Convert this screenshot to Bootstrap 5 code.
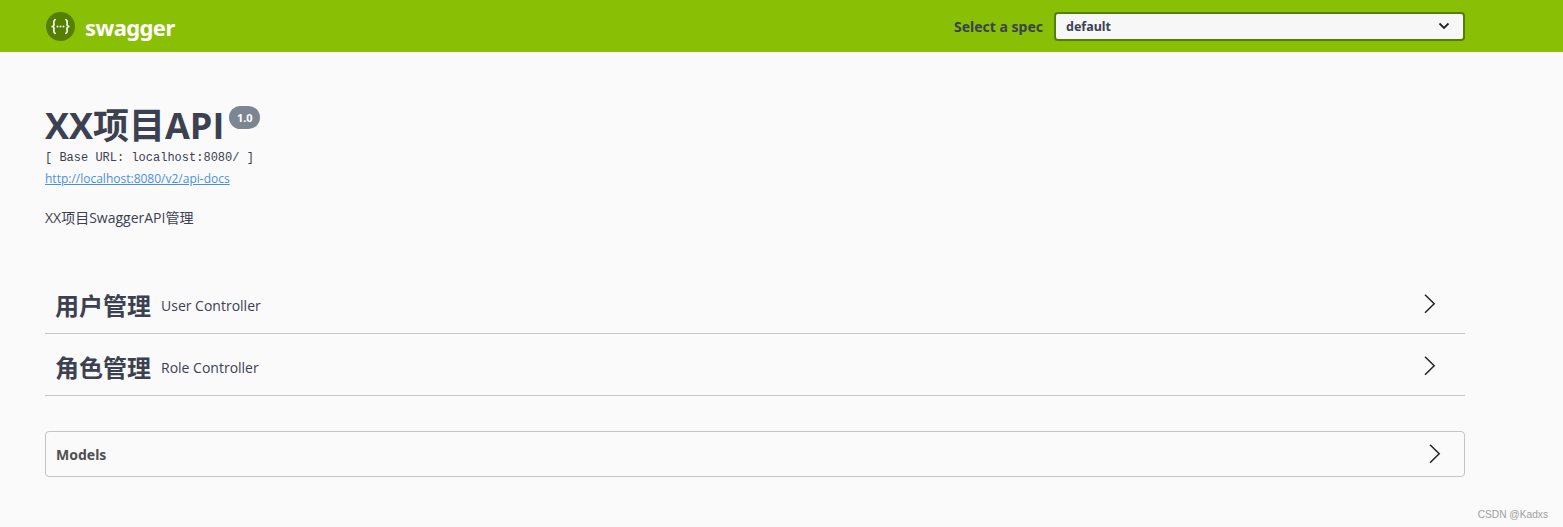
<!DOCTYPE html>
<html lang="zh-CN">
<head>
  <meta charset="UTF-8">
  <meta name="viewport" content="width=device-width, initial-scale=1.0">
  <title>Swagger UI</title>
  <link href="https://cdn.jsdelivr.net/npm/bootstrap@5.3.0/dist/css/bootstrap.min.css" rel="stylesheet">
  <style>
    body { background: #fafafa; color: #3b4151; font-family: "Open Sans", "Noto Sans CJK SC", sans-serif; height: 527px; overflow: hidden; position: relative; }
    .wrap-box { width: 1420px; margin-left: 45px; }
    .top-strip { background: #89bf04; height: 52px; }
    .brand-logo { margin: 1px 0 0 1px; }
    .brand-name { font-family: "Noto Sans", sans-serif; font-weight: 700; font-size: 22px; color: #fff; line-height: 1; letter-spacing: -.6px; margin-left: 10px; margin-top: 2px; }
    .spec-label { font-family: "Noto Sans", sans-serif; font-weight: 700; font-size: 14px; color: #3b4151; letter-spacing: 0; margin-right: 11px; }
    .spec-select { width: 411px; height: 29px; border: 2px solid #547f00; border-radius: 4px; background: #f7f7f7; font-family: "Noto Sans", sans-serif; font-weight: 700; font-size: 12.5px; color: #3b4151; padding: 0 13px 0 10px; }
    .spec-value { margin-top: 2px; }
    .api-title { font-family: "Open Sans", "Noto Sans CJK SC", sans-serif; font-weight: 700; font-size: 36px; line-height: 46px; margin: 0; }
    .ver-pill { background: #7d8492; color: #fff; font-family: "Noto Sans", sans-serif; font-weight: 700; font-size: 11px; border-radius: 57px; padding: 3px 7.5px; line-height: 17px; margin-left: 5px; margin-top: 3px; height: 23px; }
    .info-block { padding-top: 51px; }
    .base-url { font-family: "Liberation Mono", monospace; font-size: 12px; line-height: 14px; margin-top: 2px; color: #3b4151; }
    .docs-link { font-size: 12px; line-height: 16px; color: #4990e2; display: block; margin-top: 6px; }
    .desc-text { font-size: 14px; line-height: 20px; margin-top: 21px; }
    .tag-list { margin-top: 44px; }
    .tag-row { height: 62px; border-bottom: 1px solid #c5c6ca; padding: 6px 0 0 10px; }
    .tag-name { font-family: "Noto Sans CJK SC", sans-serif; font-weight: 700; font-size: 24px; line-height: 1; margin-bottom: 2px; }
    .tag-desc { font-size: 14px; margin-left: 10px; }
    .chev-icon { width: 20px; height: 20px; margin: 0 25px 3px 0; flex: none; }
    .models-box { height: 46px; margin-top: 35px; border: 1px solid #c3c4c9; border-radius: 4px; padding-left: 10px; }
    .models-name { font-family: "Noto Sans", sans-serif; font-weight: 700; font-size: 14px; color: #505050; }
    .models-box .chev-icon { margin: 0 19px 0 0; }
    .mark-csdn { position: absolute; right: 15px; bottom: 5px; font-family: "Liberation Sans", sans-serif; font-size: 10.2px; color: #a0a0a0; }
  </style>
</head>
<body>
  <div class="top-strip">
    <div class="wrap-box h-100 d-flex align-items-center justify-content-between">
      <div class="d-flex align-items-center">
        <svg class="brand-logo" width="29" height="29" viewBox="0 0 29 29">
          <circle cx="14.5" cy="14.5" r="14.5" fill="#547f00"/>
          <path d="M10 7.500c-3 0-2 3.500-2 5s-1 2-2.500 2c1.500 0 2.500.5 2.500 2s-1 5 2 5M19 7.500c3 0 2 3.500 2 5s1 2 2.500 2c-1.500 0-2.500.5-2.500 2s1 5-2 5" fill="none" stroke="#fff" stroke-width="1.600"/>
          <circle cx="11.500" cy="14.500" r="1" fill="#fff"/><circle cx="14.500" cy="14.500" r="1" fill="#fff"/><circle cx="17.500" cy="14.500" r="1" fill="#fff"/>
        </svg>
        <span class="brand-name">swagger</span>
      </div>
      <div class="d-flex align-items-center">
        <span class="spec-label">Select a spec</span>
        <div class="spec-select d-flex align-items-center justify-content-between">
          <span class="spec-value">default</span>
          <svg width="12" height="8" viewBox="0 0 12 8"><path d="M1.500 1.500 6 6l4.500-4.500" fill="none" stroke="#222" stroke-width="1.800"/></svg>
        </div>
      </div>
    </div>
  </div>

  <div class="wrap-box">
    <div class="info-block">
      <div class="d-flex align-items-start">
        <h2 class="api-title">XX项目API</h2>
        <span class="ver-pill">1.0</span>
      </div>
      <div class="base-url">[ Base URL: localhost:8080/ ]</div>
      <a class="docs-link" href="#">http://localhost:8080/v2/api-docs</a>
      <div class="desc-text">XX项目SwaggerAPI管理</div>
    </div>

    <div class="tag-list">
      <div class="tag-row d-flex align-items-center">
        <span class="tag-name">用户管理</span>
        <span class="tag-desc flex-grow-1">User Controller</span>
        <svg class="chev-icon" viewBox="0 0 20 20"><path d="M5 .8 14.200 9.800 5 18.800" fill="none" stroke="#222" stroke-width="1.500"/></svg>
      </div>
      <div class="tag-row d-flex align-items-center">
        <span class="tag-name">角色管理</span>
        <span class="tag-desc flex-grow-1">Role Controller</span>
        <svg class="chev-icon" viewBox="0 0 20 20"><path d="M5 .8 14.200 9.800 5 18.800" fill="none" stroke="#222" stroke-width="1.500"/></svg>
      </div>
    </div>

    <div class="models-box d-flex align-items-center justify-content-between">
      <span class="models-name">Models</span>
      <svg class="chev-icon" viewBox="0 0 20 20"><path d="M5 .8 14.200 9.800 5 18.800" fill="none" stroke="#222" stroke-width="1.500"/></svg>
    </div>
  </div>

  <div class="mark-csdn">CSDN @Kadxs</div>
  <script src="https://cdn.jsdelivr.net/npm/bootstrap@5.3.0/dist/js/bootstrap.bundle.min.js"></script>
</body>
</html>
